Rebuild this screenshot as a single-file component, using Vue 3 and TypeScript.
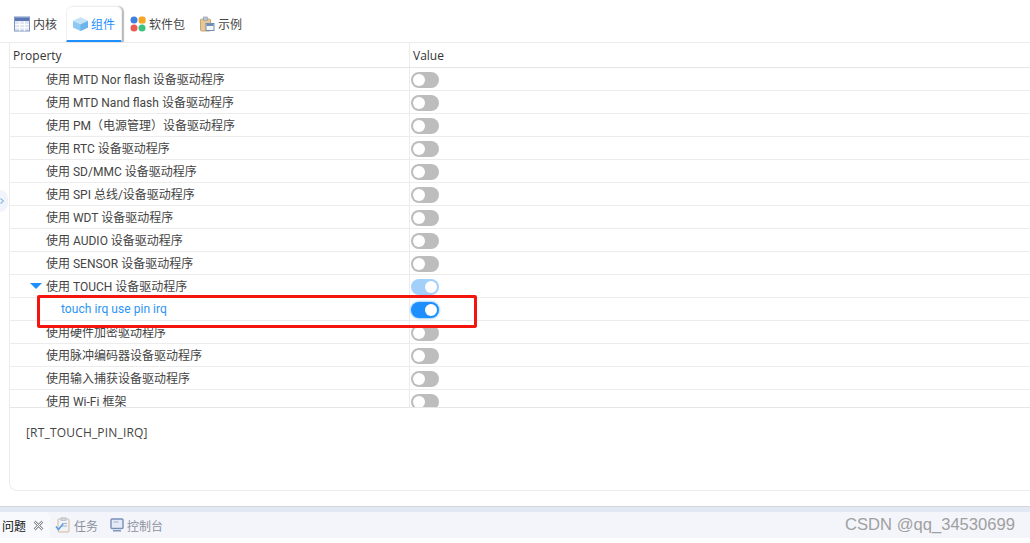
<script setup lang="ts">
interface Row { label: string; state?: 'off' | 'faded' | 'on'; level?: number; open?: boolean }
const rows: Row[] = [
  { label: '使用 MTD Nor flash 设备驱动程序' },
  { label: '使用 MTD Nand flash 设备驱动程序' },
  { label: '使用 PM（电源管理）设备驱动程序' },
  { label: '使用 RTC 设备驱动程序' },
  { label: '使用 SD/MMC 设备驱动程序' },
  { label: '使用 SPI 总线/设备驱动程序' },
  { label: '使用 WDT 设备驱动程序' },
  { label: '使用 AUDIO 设备驱动程序' },
  { label: '使用 SENSOR 设备驱动程序' },
  { label: '使用 TOUCH 设备驱动程序', state: 'faded', open: true },
  { label: 'touch irq use pin irq', state: 'on', level: 1 },
  { label: '使用硬件加密驱动程序' },
  { label: '使用脉冲编码器设备驱动程序' },
  { label: '使用输入捕获设备驱动程序' },
  { label: '使用 Wi-Fi 框架' },
]
</script>

<template>
  <div class="page">
    <nav class="tabs">
      <div class="tab t1">
        <svg width="16" height="16" viewBox="0 0 16 16"><rect x="0.5" y="1" width="15" height="14" fill="#dfe6f2" stroke="#7f96c4"/><rect x="1" y="1.5" width="14" height="3.5" fill="#5b78b4"/><path d="M1 8.5h14M1 11.7h14M5.7 5v10M10.4 5v10" stroke="#fff" stroke-width="1"/></svg>
        <span>内核</span>
      </div>
      <div class="tab active">
        <svg width="17" height="16" viewBox="0 0 17 16"><path d="M8.5 1.5 16 5v6.5L8.5 15 1 11.5V5z" fill="#8fc8f2"/><path d="M8.5 1.5 16 5 8.5 8.6 1 5z" fill="#c5e3f8"/><path d="M8.5 8.6V15L16 11.5V5z" fill="#6eb4ec"/></svg>
        <span>组件</span>
      </div>
      <div class="tab t3">
        <svg width="16" height="16" viewBox="0 0 16 16"><circle cx="4" cy="4" r="3.5" fill="#3f7fe0"/><rect x="8.6" y="0.5" width="7" height="7" rx="2.6" fill="#f5a623"/><circle cx="4" cy="12" r="3.5" fill="#ea5b52"/><circle cx="12" cy="12" r="3.5" fill="#3cc47c"/></svg>
        <span>软件包</span>
      </div>
      <div class="tab">
        <svg width="16" height="16" viewBox="0 0 16 16"><rect x="1.5" y="3" width="10" height="12" rx="1" fill="#e9c795" stroke="#c9a878"/><rect x="4.5" y="1" width="4" height="3.5" fill="#b9c4d4" stroke="#8c99ac" stroke-width=".6"/><rect x="7" y="7.5" width="8" height="7" fill="#f4f8fc" stroke="#6f8db5"/><rect x="7.5" y="8" width="7" height="2" fill="#6f8db5"/></svg>
        <span>示例</span>
      </div>
    </nav>

    <main class="panel">
      <div class="head">
        <div class="col-prop">Property</div>
        <div class="col-val">Value</div>
      </div>
      <div class="body">
        <div v-for="r in rows" :key="r.label" class="row">
          <div class="col-prop" :class="{ child: r.level, selected: r.level }">
            <span v-if="r.open" class="caret"></span>
            <span class="lbl">{{ r.label }}</span>
          </div>
          <div class="col-val">
            <span class="switch" :class="r.state ?? 'off'"><i></i></span>
          </div>
        </div>
      </div>
      <div class="info">[RT_TOUCH_PIN_IRQ]</div>
      <div class="highlight"></div>
    </main>

    <div class="grip">
      <svg width="4" height="6" viewBox="0 0 4 6"><path d="M0.5 0.5 3.5 3 0.5 5.5" fill="none" stroke="#8db8e0" stroke-width="1.2"/></svg>
    </div>

    <div class="sash"></div>

    <footer class="status">
      <div class="stab current">
        <span>问题</span>
        <svg width="11" height="11" viewBox="0 0 11 11"><path d="M1.5 1.5l8 8M9.5 1.5l-8 8" stroke="#8a8f98" stroke-width="2.6"/><path d="M1.5 1.5l8 8M9.5 1.5l-8 8" stroke="#fff" stroke-width="1"/></svg>
      </div>
      <div class="stab s2">
        <svg width="16" height="16" viewBox="0 0 16 16"><rect x="3" y="2" width="11" height="13" rx="1" fill="#f0f2f6" stroke="#d2b998"/><rect x="6" y="0.8" width="5" height="2.6" fill="#cfd6e0" stroke="#a8b2c0" stroke-width=".6"/><path d="M7 6.5h5M7 9h5" stroke="#9db3d0"/><path d="M1 9.5l2.5 3L8 7" fill="none" stroke="#5a9de0" stroke-width="1.6"/></svg>
        <span>任务</span>
      </div>
      <div class="stab">
        <svg width="14" height="14" viewBox="0 0 14 14"><rect x="1" y="1" width="12" height="9.5" rx="1" fill="#e4ebf6" stroke="#7890b8" stroke-width="1.4"/><path d="M3 12.8h8" stroke="#7890b8" stroke-width="1.4"/><path d="M3.5 4h5" stroke="#9fb2d0"/></svg>
        <span>控制台</span>
      </div>
      <div class="mark">CSDN @qq_34530699</div>
    </footer>
  </div>
</template>

<style scoped>
.page {
  width: 1030px;
  height: 543px;
  overflow: hidden;
  background: #fff;
  display: flex;
  flex-direction: column;
  font-family: Roboto, "Noto Sans CJK SC", sans-serif;
  font-size: 12px;
  color: #333;
  position: relative;
}
.tabs {
  height: 43px;
  flex: none;
  display: flex;
  align-items: flex-end;
  padding-left: 14px;
  box-sizing: border-box;
  border-bottom: 1px solid #ececec;
}
.tab {
  height: 36px;
  display: flex;
  align-items: center;
  gap: 3px;
  margin-right: 9px;
  color: #444;
  box-sizing: border-box;
  padding-bottom: 1px;
}
.tab.t1 { margin-right: 9px; }
.tab.t3 { margin-right: 14px; }
.tab.active {
  width: 56px;
  margin-right: 8px;
  padding-left: 5px;
  padding-bottom: 0;
  gap: 2px;
  color: #1e8fff;
  border: 1px solid #eef0f2;
  border-bottom: 2px solid #1e8fff;
  border-radius: 6px 6px 0 0;
  box-shadow: 2px 0 1px #bbb;
}
.panel {
  position: relative;
  width: 1040px;
  height: 448px;
  flex: none;
  margin-left: 9px;
  box-sizing: border-box;
  border-left: 1px solid #ececec;
  border-bottom: 1px solid #ececec;
  border-radius: 0 0 0 8px;
  display: flex;
  flex-direction: column;
}
.head {
  height: 25px;
  flex: none;
  display: flex;
  align-items: center;
  box-sizing: border-box;
  border-bottom: 1px solid #e6e6e6;
  font-family: "Open Sans", sans-serif;
  color: #333;
}
.head .col-prop { padding-left: 3px; }
.head .col-val { padding-left: 3px; }
.col-prop {
  width: 400px;
  flex: none;
  box-sizing: border-box;
  height: 100%;
  display: flex;
  align-items: center;
  border-right: 1px solid #ececec;
}
.col-val {
  flex: 1;
  height: 100%;
  display: flex;
  align-items: center;
}
.body {
  height: 339px;
  flex: none;
  overflow: hidden;
  border-bottom: 1px solid #e6e6e6;
}
.row {
  height: 23px;
  display: flex;
  box-sizing: border-box;
  border-bottom: 1px solid #ececec;
  align-items: center;
}
.row .col-prop {
  padding-left: 36px;
  padding-bottom: 2px;
  position: relative;
  white-space: pre;
  color: #444;
}
.row .col-prop.child {
  padding-left: 51px;
  padding-bottom: 0;
  letter-spacing: 0.05px;
}
.row .col-prop.selected {
  color: #2a94f4;
}
.caret {
  position: absolute;
  left: 20px;
  top: 8px;
  border-left: 6px solid transparent;
  border-right: 6px solid transparent;
  border-top: 6px solid #1e8fff;
}
.row .col-val {
  padding-left: 1px;
  padding-top: 2px;
  box-sizing: border-box;
}
.switch {
  width: 28px;
  height: 16px;
  border-radius: 8px;
  background: #bdbdbd;
  position: relative;
  display: block;
}
.switch i {
  position: absolute;
  top: 2px;
  left: 2px;
  width: 12px;
  height: 12px;
  border-radius: 50%;
  background: #fff;
}
.switch.on { background: #1e8fff; box-shadow: 0 0 2px 1px #a9d3fb; }
.switch.faded { background: #a3d0fb; }
.switch.on i, .switch.faded i { left: 14px; }
.info {
  padding: 16px 0 0 16px;
  color: #444;
  font-family: "Open Sans", sans-serif;
  font-size: 12px;
  letter-spacing: 0.18px;
}
.highlight {
  position: absolute;
  left: 27px;
  top: 252px;
  width: 440px;
  height: 33px;
  box-sizing: border-box;
  border: 3px solid #f5150f;
  border-radius: 2px;
}
.grip {
  position: absolute;
  left: 0;
  top: 190px;
  width: 8px;
  height: 22px;
  background: #f1f5fb;
  border-radius: 0 8px 8px 0;
  display: flex;
  align-items: center;
}
.sash {
  flex: 1;
}
.status {
  height: 31px;
  margin-bottom: 5px;
  flex: none;
  box-sizing: border-box;
  background: #f3f5fb;
  border-top: 5px solid #e3e8f5;
  box-shadow: 0 -1px 0 #d4d6da;
  display: flex;
  align-items: center;
  position: relative;
  color: #8d929b;
  font-size: 12px;
}
.stab {
  display: flex;
  align-items: center;
  gap: 3px;
  height: 26px;
  margin-right: 10px;
}
.stab.s2 { margin-right: 12px; }
.stab.current {
  width: 50px;
  padding-left: 2px;
  gap: 7px;
  margin-right: 5px;
  background: #f8f9fd;
  color: #111;
  border-radius: 0 6px 0 0;
  box-sizing: border-box;
}
.mark {
  position: absolute;
  right: 15px;
  top: 3px;
  font-family: "Liberation Sans", sans-serif;
  font-size: 16.6px;
  color: #a0a0a0;
}
</style>
